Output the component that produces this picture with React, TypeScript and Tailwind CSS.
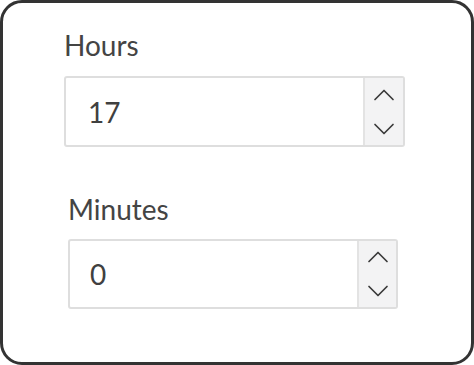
import React from "react";

function Chevron({ up }: { up?: boolean }) {
  return (
    <svg width="22" height="12" viewBox="0 0 22 12" fill="none">
      <path
        d={up ? "M2 10.5 L11 1.5 L20 10.5" : "M2 1.5 L11 10.5 L20 1.5"}
        stroke="#3a3a3a"
        strokeWidth="1.7"
        strokeLinecap="round"
        strokeLinejoin="round"
      />
    </svg>
  );
}

function NumberField({
  value,
  width,
  height,
  padLeft,
  spinW,
  gap,
}: {
  value: string;
  width: string;
  height: string;
  padLeft: string;
  spinW: string;
  gap: string;
}) {
  return (
    <div
      className={`flex border-2 border-[#dedede] rounded-[3px] bg-white ${width} ${height}`}
    >
      <div className={`flex-1 flex items-center ${padLeft} text-[28px] text-[#404040]`}>
        {value}
      </div>
      <div
        className={`${spinW} flex flex-col items-center justify-center ${gap} bg-[#f3f3f4] border-l-2 border-[#e3e3e3]`}
      >
        <Chevron up />
        <Chevron />
      </div>
    </div>
  );
}

export default function App() {
  return (
    <div
      className="w-[474px] h-[365px] bg-white border-[3px] border-[#333333] rounded-[22px] box-border"
      style={{ fontFamily: "Lato, 'Open Sans', sans-serif" }}
    >
      <div className="pt-[25px] pl-[61px] flex flex-col">
        <div className="text-[28px] leading-[34px] text-[#444444]">Hours</div>
        <div className="mt-[14px]">
          <NumberField
            value="17"
            width="w-[341px]"
            height="h-[71px]"
            padLeft="pl-[22px]"
            spinW="w-[40px]"
            gap="gap-[22px]"
          />
        </div>
      </div>
      <div className="pt-[45px] pl-[65px] flex flex-col">
        <div className="text-[28px] leading-[34px] text-[#444444]">Minutes</div>
        <div className="mt-[13px]">
          <NumberField
            value="0"
            width="w-[330px]"
            height="h-[70px]"
            padLeft="pl-[20px]"
            spinW="w-[39px]"
            gap="gap-[22px]"
          />
        </div>
      </div>
    </div>
  );
}
